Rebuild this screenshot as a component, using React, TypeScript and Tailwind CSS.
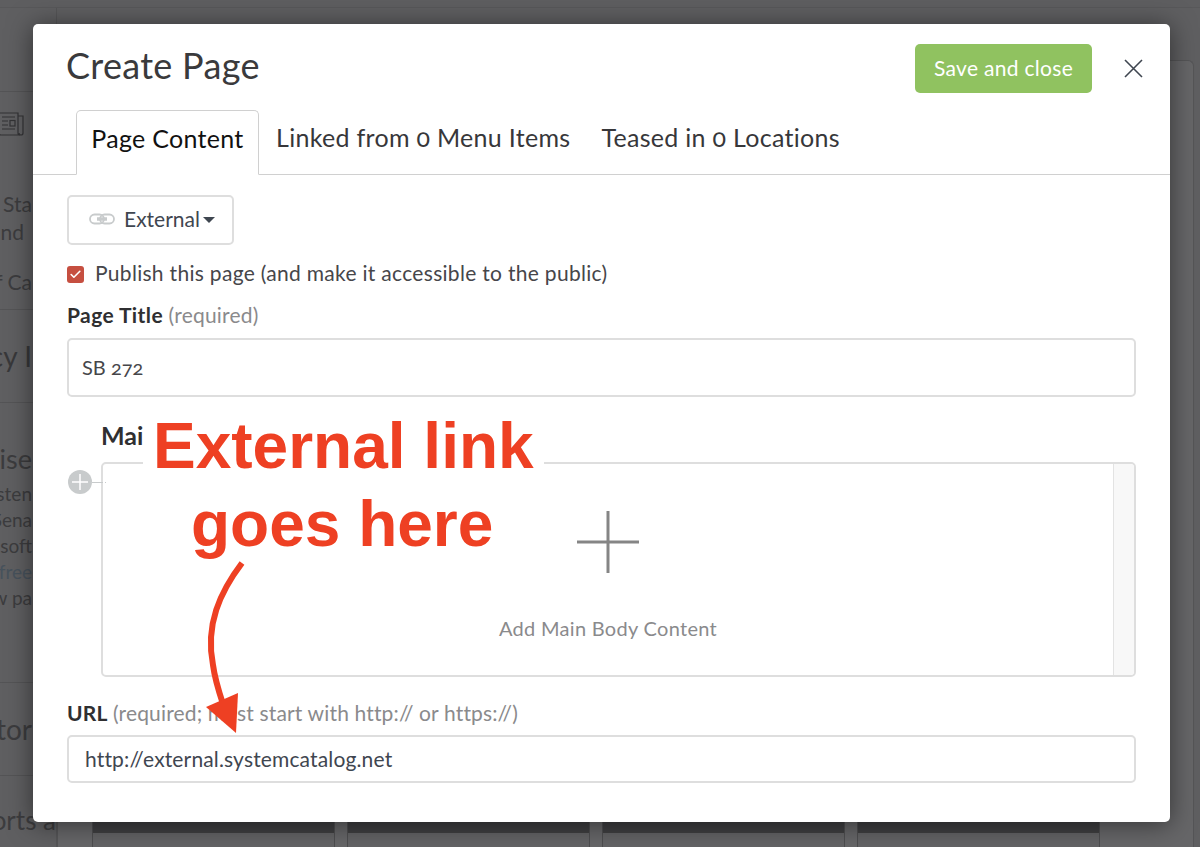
import { Check } from "lucide-react";

const font = { fontFamily: "Lato, 'Open Sans', sans-serif" };

function Backdrop() {
  return (
    <div className="flex h-full flex-col">
      <div className="h-[8px] border-b border-[#58585a] bg-[#5e5e60]" />
      <div className="flex flex-1">
        <div className="flex w-[57px] flex-col overflow-hidden border-r border-[#555557] whitespace-nowrap text-[#3c3c3e]">
          <div className="h-[83px]" />

          <div className="h-[218px] border-t border-[#545456] pr-[24px] text-[21px] leading-[28px]">
            <div className="flex justify-end pr-[8px] pt-[20px]">
              <svg width="26" height="24" viewBox="0 0 26 24" fill="none" stroke="#333335" strokeWidth="1.2" className="shrink-0">
                <path d="M1 1h19v20a2 2 0 0 0 2 2H3a2 2 0 0 1-2-2z" />
                <path d="M20 4h5v17a2 2 0 0 1-4 0" />
                <path d="M4 5h13M4 9h6M4 13h6M4 17h13" />
                <rect x="12" y="8.5" width="5" height="5.5" />
              </svg>
            </div>
            <div className="mt-[54px] flex justify-end">Sta</div>
            <div className="flex justify-end pr-[8px]">and</div>
            <div className="mt-[22px] flex justify-end">f Ca</div>
          </div>

          <div className="h-[93px] border-t border-[#545456]">
            <div className="flex h-full items-center justify-end pr-[24px] text-[28px] text-[#38383a]">cy I</div>
          </div>

          <div className="h-[280px] border-t border-[#545456] pr-[24px] text-[19px] leading-[26px]">
            <div className="flex justify-end pt-[36px] text-[27px] leading-[40px]">rise</div>
            <div className="mt-[2px] flex justify-end">sten</div>
            <div className="flex justify-end">Sena</div>
            <div className="flex justify-end">soft</div>
            <div className="flex justify-end text-[#47525c]">free</div>
            <div className="flex justify-end">w pa</div>
          </div>

          <div className="h-[93px] border-t border-[#545456]">
            <div className="flex h-full items-center justify-end pr-[24px] text-[28px]">tor</div>
          </div>

          <div className="flex-1 border-t border-[#545456] pt-[26px] text-[26px] leading-[36px]">
            <div className="flex justify-end">orts a</div>
          </div>
        </div>

        <div className="flex flex-1 flex-col pr-[6px] pt-[52px]">
          <div className="flex flex-1 flex-col justify-end rounded-t-[6px] border-x border-t border-[#555557] bg-[#666668] pl-[34px]">
            <div className="flex gap-[12px]">
              <BackCard />
              <BackCard />
              <BackCard />
              <BackCard />
            </div>
          </div>
        </div>
      </div>
    </div>
  );
}

function BackCard() {
  return (
    <div className="w-[243px] border-x border-[#4d4d4f]">
      <div className="h-[11px] bg-[#3f3f41]" />
      <div className="h-[14px] bg-[#636365]" />
    </div>
  );
}

function LinkIcon() {
  return (
    <svg width="26" height="12" viewBox="0 0 26 12" fill="none" stroke="#c8cbcc" strokeWidth="1.8">
      <rect x="1" y="1.5" width="14" height="9" rx="4.5" />
      <rect x="11" y="1.5" width="14" height="9" rx="4.5" />
      <path d="M8 6h10" strokeWidth="3.5" />
    </svg>
  );
}

function Modal() {
  return (
    <div className="absolute left-[33px] top-[24px] h-[798px] w-[1137px] rounded-[5px] bg-white shadow-[0_2px_26px_rgba(0,0,0,0.5)]">
      <div className="flex h-[86px] items-start pl-[33px] pr-[27px] pt-[20px]">
        <h1 className="flex-1 text-[36px] leading-[42px] tracking-[0.3px] text-[#3a3a3c]">Create Page</h1>
        <button className="h-[49px] w-[177px] rounded-[5px] bg-[#90c260] pb-[2px] text-[21px] tracking-[0.3px] text-white">
          Save and close
        </button>
        <button className="ml-[32px] mt-[15px]" aria-label="Close">
          <svg width="19" height="19" viewBox="0 0 19 19" stroke="#3f4650" strokeWidth="1.6">
            <path d="M1 1l17 17M18 1L1 18" />
          </svg>
        </button>
      </div>

      <div className="flex h-[65px] items-end border-b border-[#d0d0d0] pl-[43px] text-[25px] tracking-[0.3px]">
        <div className="mb-[-1px] flex h-[65px] w-[183px] items-center justify-center rounded-t-[5px] border border-b-white border-[#d0d0d0] pb-[7px] text-[#111]">
          Page Content
        </div>
        <div className="flex h-[65px] items-center pb-[8px] pl-[17px] text-[#37373a]">
          <span className="oldstyle-nums">Linked from 0 Menu Items</span>
          <span className="ml-[31px] oldstyle-nums">Teased in 0 Locations</span>
        </div>
      </div>

      <div className="px-[34px]">
        <button className="mt-[20px] flex h-[50px] w-[167px] items-center rounded-[5px] border-2 border-[#dedede] pb-[3px] pl-[20px] text-[21px] text-[#3f4650]">
          <LinkIcon />
          <span className="ml-[9px]">External</span>
          <span className="ml-[3px] mt-[3px] border-x-[6px] border-t-[6px] border-x-transparent border-t-[#3f4650]" />
        </button>

        <label className="mt-[19px] flex h-[20px] items-center text-[21px] tracking-[0.3px] text-[#46464a]">
          <span className="flex h-[17px] w-[17px] items-center justify-center rounded-[3px] bg-[#c64f40]">
            <Check size={13} color="white" strokeWidth={3} />
          </span>
          <span className="ml-[11px] pb-[3px]">Publish this page (and make it accessible to the public)</span>
        </label>

        <div className="mt-[19px] h-[24px] text-[21px] leading-[24px] tracking-[0.2px] text-[#8a8a8c]">
          <b className="font-bold tracking-[0.4px] text-[#2f2f31]">Page Title</b> (required)
        </div>
        <div className="mt-[11px] flex h-[59px] items-center rounded-[5px] border-2 border-[#dedede] pb-[2px] pl-[13px] text-[20px] text-[#46464a] oldstyle-nums">
          SB 272
        </div>

        <div className="relative ml-[34px] mt-[25px]">
          <div className="h-[40px] text-[25px] font-bold leading-[26px] text-[#2f2f31]">Mai</div>
          <div className="flex h-[215px] rounded-[5px] border-2 border-[#dedede]">
            <div className="flex flex-1 flex-col items-center pt-[47px]">
              <svg width="62" height="62" viewBox="0 0 62 62" stroke="#858585" strokeWidth="3">
                <path d="M31 0v62M0 31h62" />
              </svg>
              <div className="mt-[40px] text-[20px] tracking-[0.3px] text-[#8a8a8c]">Add Main Body Content</div>
            </div>
            <div className="w-[21px] rounded-r-[4px] border-l border-[#e3e3e3] bg-[#f8f8f8]" />
          </div>
          <div className="absolute left-[-33px] top-[48px] flex items-center">
            <span className="flex h-[24px] w-[24px] items-center justify-center rounded-full bg-[#c8cbcc]">
              <svg width="16" height="16" viewBox="0 0 16 16" stroke="white" strokeWidth="1.5">
                <path d="M8 0v16M0 8h16" />
              </svg>
            </span>
            <span className="w-[11px] border-t border-[#c8cbcc]" />
            <span className="ml-[2px] w-[1px] border-t border-[#c8cbcc]" />
          </div>
        </div>

        <div className="mt-[24px] h-[24px] text-[21px] leading-[24px] tracking-[0.15px] text-[#8a8a8c]">
          <b className="font-bold text-[#2f2f31]">URL</b> (required; must start with http:// or https://)
        </div>
        <div className="mt-[10px] flex h-[48px] items-center rounded-[5px] border-2 border-[#dedede] pb-[1px] pl-[16px] text-[21px] tracking-[0.15px] text-[#3f4650]">
          http://external.systemcatalog.net
        </div>
      </div>
    </div>
  );
}

function Annotation() {
  return (
    <>
      <div
        className="absolute left-[143px] top-[412px] bg-white px-[10px] text-[64px] font-bold leading-[68px] text-[#ee4023]"
        style={{ fontFamily: "'Liberation Sans', Arial, sans-serif" }}
      >
        External link
      </div>
      <div
        className="absolute left-[191px] top-[490px] text-[64px] font-bold leading-[68px] text-[#ee4023]"
        style={{ fontFamily: "'Liberation Sans', Arial, sans-serif" }}
      >
        goes here
      </div>
      <svg className="absolute left-[200px] top-[555px]" width="50" height="185" viewBox="200 555 50 185" fill="none">
        <path d="M242 563C220 592 205 625 213 665C215 680 219 692 223 704" stroke="#ee4023" strokeWidth="6" />
        <path d="M206 707L238 693L236 733Z" fill="#ee4023" />
      </svg>
    </>
  );
}

export default function App() {
  return (
    <div className="relative h-[847px] w-[1200px] overflow-hidden bg-[#5f5f61]" style={font}>
      <Backdrop />
      <Modal />
      <Annotation />
    </div>
  );
}
